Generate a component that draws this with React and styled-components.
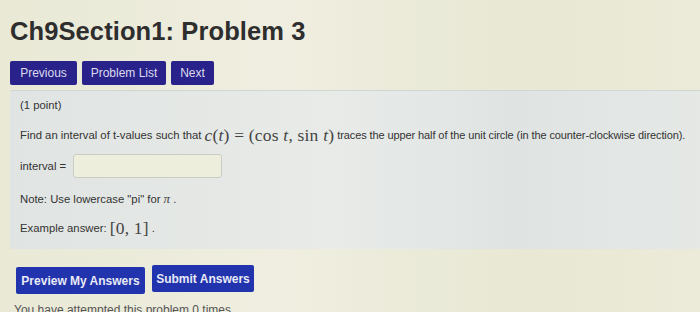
import React from "react";
import styled, { createGlobalStyle } from "styled-components";

const Global = createGlobalStyle`
  html, body { margin:0; padding:0; }
  body {
    background:#ebead8;
    font-family:"Liberation Sans", Arial, sans-serif;
    color:#333;
    overflow:hidden;
  }
`;

const Page = styled.div`
  width:700px; height:312px; overflow:hidden;
  padding:17px 0 0 10px; box-sizing:border-box;
  background:linear-gradient(90deg,#e9e9d6 0%,#efeee0 40%,#e8e8d4 75%,#ecebd9 100%);
`;

const Title = styled.h1`
  margin:0; font-size:25.5px; font-weight:700; color:#2e2e2e; line-height:28px;
  letter-spacing:0.1px;
`;

const Nav = styled.div`
  display:flex; gap:5px; margin-top:16px;
`;

const NavBtn = styled.button`
  height:24px; width:${p => p.w}px; padding:0;
  background:#29228a; color:#dcdcee; border:none; border-radius:2px;
  font-family:inherit; font-size:12px;
`;

const Panel = styled.div`
  margin-top:5px; width:720px; height:159px; box-sizing:border-box;
  padding:7px 10px;
  background:linear-gradient(90deg,#e0e4e2 0%,#e8ebe8 45%,#dfe4e3 70%,#e6e9e6 100%);
  border-top:1px solid #cfd6d6;
  border-radius:3px 0 0 3px;
  font-size:11.3px; color:#333;
`;

const Line = styled.div`
  display:flex; align-items:center; height:${p => p.h || 20}px;
  margin-top:${p => p.mt || 0}px; white-space:nowrap;
`;

const Tail = styled.span`
  font-size:11px; letter-spacing:-0.1px;
`;

const Math = styled.span`
  font-family:"Liberation Serif","DejaVu Serif",serif; font-size:${p => p.size || 17.5}px; color:#444;
  margin:0 3px; letter-spacing:0.2px;
`;

const Var = styled.i`
  font-style:italic;
`;

const Input = styled.div`
  width:147px; height:22px; margin-left:7px;
  background:#eeeedd; border:1px solid #c9cdc6; border-radius:3px;
`;

const Actions = styled.div`
  display:flex; align-items:flex-start; gap:7px; margin:16px 0 0 6px;
`;

const ActBtn = styled.button`
  width:${p => p.w}px; height:27px; padding:0; margin-top:${p => p.mt || 0}px;
  background:#2133ad; color:#e8eaf6; border:none; border-radius:2px;
  font-family:inherit; font-size:12px; font-weight:700;
`;

const Foot = styled.div`
  margin:9px 0 0 4px; font-size:12px; color:#555;
`;

export default function App() {
  return (
    <>
      <Global />
      <Page>
        <Title>Ch9Section1: Problem 3</Title>
        <Nav>
          <NavBtn w={67}>Previous</NavBtn>
          <NavBtn w={84}>Problem List</NavBtn>
          <NavBtn w={43}>Next</NavBtn>
        </Nav>
        <Panel>
          <Line h={14}>(1 point)</Line>
          <Line h={22} mt={12}>
            Find an interval of t-values such that
            <Math>
              <Var>c</Var>(<Var>t</Var>) = (cos<Var> t</Var>, sin <Var>t</Var>)
            </Math>
            <Tail>traces the upper half of the unit circle (in the counter-clockwise direction).</Tail>
          </Line>
          <Line h={24} mt={8}>
            interval =<Input />
          </Line>
          <Line h={14} mt={14}>
            Note: Use lowercase "pi" for <Math size={13}><Var>π</Var></Math>.
          </Line>
          <Line h={22} mt={11}>
            Example answer: <Math>[0, 1]</Math>.
          </Line>
        </Panel>
        <Actions>
          <ActBtn w={129} mt={2}>Preview My Answers</ActBtn>
          <ActBtn w={102}>Submit Answers</ActBtn>
        </Actions>
        <Foot>You have attempted this problem 0 times.</Foot>
      </Page>
    </>
  );
}
